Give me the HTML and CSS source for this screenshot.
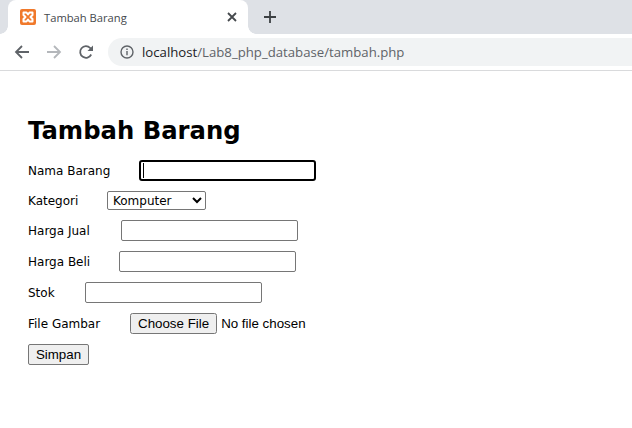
FILE: index.html
```html
<!DOCTYPE html>
<html lang="id">
<head>
<meta charset="utf-8">
<title>Tambah Barang</title>
<link rel="stylesheet" href="styles.css">
</head>
<body>
<header class="chrome">
  <div class="tabstrip">
    <div class="tab">
      <svg class="favicon" viewBox="0 0 16 16" width="16" height="16"><rect width="16" height="16" rx="2" fill="#f0792b"/><path d="M3.500 3.500h3L8 5.500l1.500-2h3v2.500L10.500 8l2 2v2.500h-3L8 10.500l-1.500 2h-3V10l2-2-2-2z" fill="none" stroke="#fff" stroke-width="2" stroke-linejoin="round"/></svg>
      <span class="tab-title">Tambah Barang</span>
      <svg class="tab-close" viewBox="0 0 10 10" width="10" height="10"><path d="M1 1l8 8M9 1l-8 8" stroke="#45494d" stroke-width="1.800" fill="none"/></svg>
    </div>
    <svg class="new-tab" viewBox="0 0 12 12" width="12" height="12"><path d="M6 0v12M0 6h12" stroke="#3c4043" stroke-width="1.800" fill="none"/></svg>
  </div>
  <div class="toolbar">
    <svg class="nav" viewBox="0 0 16 16" width="16" height="16"><path d="M15 8H2M8 2L2 8l6 6" stroke="#5f6368" stroke-width="1.800" fill="none"/></svg>
    <svg class="nav" viewBox="0 0 16 16" width="16" height="16"><path d="M1 8h13M8 2l6 6-6 6" stroke="#b4b7bb" stroke-width="1.800" fill="none"/></svg>
    <svg class="nav" viewBox="0 0 16 16" width="16" height="16"><path d="M13.200 10.500A5.800 5.800 0 1 1 12.200 4L14 5.800" stroke="#5f6368" stroke-width="1.800" fill="none"/><path d="M15 1.500V7H9.500z" fill="#5f6368"/></svg>
    <div class="omnibox">
      <svg class="info" viewBox="0 0 14 14" width="14" height="14"><circle cx="7" cy="7" r="6" stroke="#5f6368" stroke-width="1.400" fill="none"/><path d="M7 6v4.200M7 3.500v1.400" stroke="#5f6368" stroke-width="1.400" fill="none"/></svg>
      <span class="url"><span class="host">localhost</span>/Lab8_php_database/tambah.php</span>
    </div>
  </div>
</header>
<main class="page">
  <h1 class="title">Tambah Barang</h1>
  <form class="form">
    <div class="row"><label class="label">Nama Barang</label><span class="focus-wrap"><input class="field field-focus" type="text"><span class="caret"></span></span></div>
    <div class="row"><label class="label lab-kat">Kategori</label><select class="select"><option>Komputer</option></select></div>
    <div class="row"><label class="label lab-jual">Harga Jual</label><input class="field" type="text"></div>
    <div class="row"><label class="label lab-beli">Harga Beli</label><input class="field" type="text"></div>
    <div class="row"><label class="label lab-stok">Stok</label><input class="field" type="text"></div>
    <div class="row"><label class="label lab-file">File Gambar</label><input class="file" type="file"></div>
    <div class="row"><button class="save" type="button">Simpan</button></div>
  </form>
</main>
</body>
</html>
```
FILE: styles.css
```css
* { box-sizing: border-box; }
html, body { margin: 0; padding: 0; height: 100%; background: #fff; overflow: hidden; }
body { font-family: "DejaVu Sans", sans-serif; font-size: 12px; color: #000; }

.chrome { height: 71px; border-bottom: 1px solid #d9dadc; }
.tabstrip { height: 34px; background: #dee1e6; display: flex; align-items: flex-start; padding: 0 0 0 8px; }
.tab { position: relative; width: 240px; height: 34px; background: #fff; border-radius: 8px 8px 0 0; display: flex; align-items: center; padding: 0 11px 0 12px; }
.tab::before, .tab::after { content: ""; position: absolute; bottom: 0; width: 8px; height: 8px; }
.tab::before { left: -8px; background: radial-gradient(circle at 0 0, #dee1e6 7.500px, #fff 8px); }
.tab::after { right: -8px; background: radial-gradient(circle at 100% 0, #dee1e6 7.500px, #fff 8px); }
.favicon { flex: none; }
.tab-title { font-family: "Open Sans", sans-serif; font-size: 11.200px; color: #45494d; margin-left: 8px; flex: 1; }
.tab-close { flex: none; }
.new-tab { flex: none; margin: 11px 0 0 16px; }

.toolbar { height: 36px; display: flex; align-items: center; padding: 0 0 0 14px; gap: 16px; }
.omnibox { flex: 1; height: 28px; margin-left: -2px; background: #f1f3f4; border-radius: 14px 0 0 14px; display: flex; align-items: center; padding-left: 12px; }
.info { flex: none; }
.url { font-family: "Open Sans", sans-serif; font-size: 13.200px; color: #5f6368; margin-left: 8px; }
.host { color: #202124; }

.page { padding: 0 28px; }
.title { font-size: 24.300px; font-weight: 700; margin: 0; padding-top: 45px; line-height: 30px; }
.form { margin-top: 14px; display: flex; flex-direction: column; gap: 10px; }
.row { display: flex; align-items: center; }
.label { display: block; width: 111px; flex: none; }
.lab-kat { width: 79px; }
.lab-jual { width: 93px; }
.lab-beli { width: 91px; }
.lab-stok { width: 57px; }
.lab-file { width: 102px; }
.field { display: block; width: 177px; height: 21px; border: 1px solid #767676; border-radius: 2px; padding: 1px 2px; background: #fff; font: 13.333px "Liberation Sans", sans-serif; }
.focus-wrap { position: relative; display: block; }
.field-focus { border: 2px solid #000; border-radius: 3px; outline: none; }
.caret { position: absolute; left: 4px; top: 3px; width: 1px; height: 15px; background: #000; }
.select { display: block; width: 99px; height: 19px; padding-left: 1px; font: 12px "DejaVu Sans", sans-serif; border: 1px solid #767676; border-radius: 2px; background: #fff; }
.file { display: block; height: 21px; font: 13.333px "Liberation Sans", sans-serif; }
.save { display: block; font: 13.333px "Liberation Sans", sans-serif; width: 61px; height: 21px; padding: 1px 6px; border: 1px solid #767676; border-radius: 2px; background: #efefef; color: #000; }
```
